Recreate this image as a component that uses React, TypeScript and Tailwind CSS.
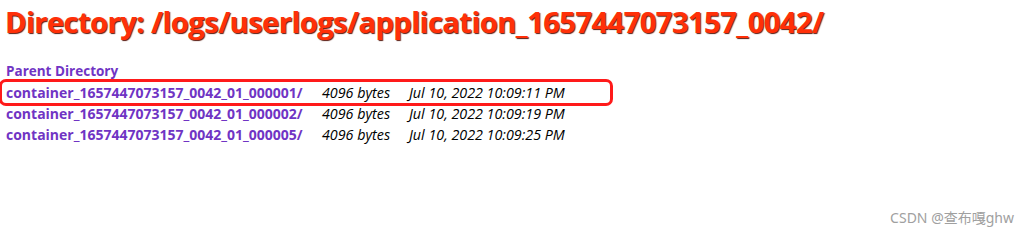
const rows = [
  { name: "container_1657447073157_0042_01_000001/", size: "4096 bytes", date: "Jul 10, 2022 10:09:11 PM", marked: true },
  { name: "container_1657447073157_0042_01_000002/", size: "4096 bytes", date: "Jul 10, 2022 10:09:19 PM" },
  { name: "container_1657447073157_0042_01_000005/", size: "4096 bytes", date: "Jul 10, 2022 10:09:25 PM" },
]

export default function App() {
  return (
    <div className="relative h-[236px] w-[1029px] overflow-hidden bg-white font-['Open_Sans',sans-serif]">
      <h1 className="pl-[5px] pt-[2px] text-[29px] font-bold leading-[40px] tracking-[-0.5px] text-[#ff3008] [text-shadow:1px_1px_1px_#5a1a10]">
        Directory: /logs/userlogs/application_1657447073157_0042/
      </h1>
      <div className="mt-[18px] pl-[6px] text-[14.3px] leading-[21px]">
        <a href="#" className="text-[13.5px] font-bold text-[#7034c4]">Parent Directory</a>
        {rows.map((r) => (
          <div
            key={r.name}
            className={
              "grid grid-cols-[316px_87px_auto] " +
              (r.marked ? "-mx-[4px] w-[608px] rounded-[4px] px-[4px] outline-[3px] outline-[#ff1a1a]" : "")
            }
          >
            <a href="#" className="text-[14px] font-bold text-[#7034c4]">{r.name}</a>
            <span className="italic text-black">{r.size}</span>
            <span className="italic text-black">{r.date}</span>
          </div>
        ))}
      </div>
      <div className="absolute bottom-[8px] right-[15px] font-['Noto_Sans','Noto_Sans_CJK_SC',sans-serif] text-[14px] text-[#a0a0a0]">
        CSDN @查布嘎ghw
      </div>
    </div>
  )
}
